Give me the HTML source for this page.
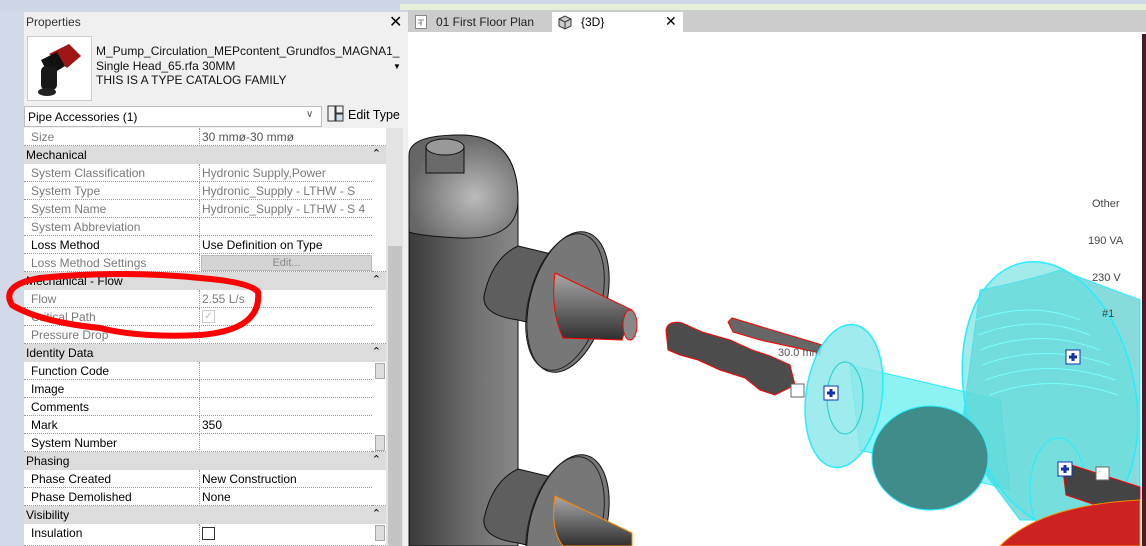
<!DOCTYPE html>
<html><head><meta charset="utf-8"><style>
*{margin:0;padding:0;box-sizing:border-box}
html,body{width:1146px;height:546px;overflow:hidden}
body{background:#fff;font-family:"Liberation Sans",sans-serif;font-size:12px;position:relative}
.a{position:absolute}
.row{position:absolute;left:24px;width:348px;height:18px;border-bottom:1px dotted #999;background:#fff}
.row .l{position:absolute;left:7px;top:2px;color:#000}
.row .v{position:absolute;left:178px;top:2px;color:#000}
.row .s{position:absolute;left:175px;top:0;width:1px;height:18px;border-left:1px dotted #999}
.g .l,.g .v{color:#7a7a7a}
.hd{position:absolute;left:24px;width:362px;height:18px;background:#dcdcdc}
.hd .l{position:absolute;left:2px;top:2px}
.hd .c{position:absolute;right:5px;top:1px;font-size:11px}
.rc{position:absolute;left:372px;width:14px;height:18px;border-bottom:1px dotted #999;background:#fff}
</style></head><body>
<div class="a" style="left:0;top:0;width:1146px;height:12px;background:#cfd7e6"></div>
<div class="a" style="left:400px;top:4px;width:746px;height:6px;background:#e6f0d8"></div>
<div class="a" style="left:0;top:12px;width:24px;height:534px;background:#d2d9e8"></div>
<div class="a" style="left:24px;top:12px;width:380px;height:534px;background:#f0f0f0"></div>
<div class="a" style="left:26px;top:15px;font-size:12px;color:#333">Properties</div>
<div class="a" style="left:389px;top:12px;font-size:16px">✕</div>
<div class="a" style="left:27px;top:36px;width:65px;height:65px;background:#fff;border:1px solid #ccc"></div>
<svg class="a" style="left:27px;top:36px" width="65" height="65"><path d="M22 18 L42 8 L54 20 L40 32 Z" fill="#a01616"/><path d="M14 24 L30 16 L38 30 L22 40 Z" fill="#111"/><rect x="14" y="30" width="16" height="24" rx="5" fill="#181818"/><ellipse cx="20" cy="56" rx="9" ry="4" fill="#222"/></svg>
<div class="a" style="left:96px;top:44px;line-height:14.5px;color:#111">M_Pump_Circulation_MEPcontent_Grundfos_MAGNA1_<br>Single Head_65.rfa 30MM<br>THIS IS A TYPE CATALOG FAMILY</div>
<div class="a" style="left:393px;top:62px;font-size:8px">▼</div>
<div class="a" style="left:24px;top:106px;width:298px;height:21px;background:#fff;border:1px solid #bbb"></div>
<div class="a" style="left:28px;top:110px">Pipe Accessories (1)</div>
<div class="a" style="left:306px;top:109px;font-size:10px;color:#555">∨</div>
<svg class="a" style="left:327px;top:105px" width="18" height="18"><rect x="1" y="1" width="7" height="15" fill="none" stroke="#333"/><rect x="9" y="1" width="7" height="7" fill="none" stroke="#333"/><rect x="9" y="9" width="7" height="7" fill="#cde" stroke="#333"/></svg>
<div class="a" style="left:348px;top:108px;font-size:12.5px">Edit Type</div>
<div class="row g" style="top:128px"><span class="l">Size</span><span class="s"></span><span class="v" style="color:#555">30 mmø-30 mmø</span></div>
<div class="rc" style="top:128px"></div>
<div class="hd" style="top:146px"><span class="l">Mechanical</span><span class="c">⌃</span></div>
<div class="row g" style="top:164px"><span class="l">System Classification</span><span class="s"></span><span class="v">Hydronic Supply,Power</span></div>
<div class="row g" style="top:182px"><span class="l">System Type</span><span class="s"></span><span class="v">Hydronic_Supply - LTHW -  S</span></div>
<div class="row g" style="top:200px"><span class="l">System Name</span><span class="s"></span><span class="v">Hydronic_Supply - LTHW -  S 4</span></div>
<div class="row g" style="top:218px"><span class="l">System Abbreviation</span><span class="s"></span></div>
<div class="row" style="top:236px"><span class="l">Loss Method</span><span class="s"></span><span class="v">Use Definition on Type</span></div>
<div class="row g" style="top:254px"><span class="l">Loss Method Settings</span><span class="s"></span><span class="a" style="left:177px;top:1px;width:171px;height:16px;background:#d4d4d4;border:1px solid #bbb;text-align:center;color:#888;font-size:11px;line-height:14px">Edit...</span></div>
<div class="hd" style="top:272px"><span class="l">Mechanical - Flow</span><span class="c">⌃</span></div>
<div class="row g" style="top:290px"><span class="l">Flow</span><span class="s"></span><span class="v">2.55 L/s</span></div>
<div class="row g" style="top:308px"><span class="l">Critical Path</span><span class="s"></span><span class="a" style="left:178px;top:2px;width:13px;height:13px;border:1px solid #ccc;color:#bbb;font-size:10px;line-height:11px;text-align:center">✓</span></div>
<div class="row g" style="top:326px"><span class="l">Pressure Drop</span><span class="s"></span></div>
<div class="hd" style="top:344px"><span class="l">Identity Data</span><span class="c">⌃</span></div>
<div class="row" style="top:362px"><span class="l">Function Code</span><span class="s"></span></div>
<div class="row" style="top:380px"><span class="l">Image</span><span class="s"></span></div>
<div class="row" style="top:398px"><span class="l">Comments</span><span class="s"></span></div>
<div class="row" style="top:416px"><span class="l">Mark</span><span class="s"></span><span class="v">350</span></div>
<div class="row" style="top:434px"><span class="l">System Number</span><span class="s"></span></div>
<div class="hd" style="top:452px"><span class="l">Phasing</span><span class="c">⌃</span></div>
<div class="row" style="top:470px"><span class="l">Phase Created</span><span class="s"></span><span class="v">New Construction</span></div>
<div class="row" style="top:488px"><span class="l">Phase Demolished</span><span class="s"></span><span class="v">None</span></div>
<div class="hd" style="top:506px"><span class="l">Visibility</span><span class="c">⌃</span></div>
<div class="row" style="top:524px;height:22px"><span class="l">Insulation</span><span class="s"></span><span class="a" style="left:178px;top:3px;width:13px;height:13px;border:1px solid #333;background:#fff"></span></div>
<div class="rc" style="top:164px;height:108px"></div><div class="rc" style="top:290px;height:54px"></div><div class="rc" style="top:362px;height:90px"></div><div class="rc" style="top:470px;height:36px"></div><div class="rc" style="top:524px;height:22px"></div>
<div class="a" style="left:375px;top:363px;width:10px;height:16px;background:#ddd;border:1px solid #aaa"></div>
<div class="a" style="left:375px;top:435px;width:10px;height:16px;background:#ddd;border:1px solid #aaa"></div>
<div class="a" style="left:375px;top:525px;width:10px;height:16px;background:#ddd;border:1px solid #aaa"></div>
<div class="a" style="left:386px;top:128px;width:17px;height:418px;background:#e4e4e4"></div>
<div class="a" style="left:388px;top:246px;width:14px;height:300px;background:#c4c4c4"></div>
<div class="a" style="left:403px;top:12px;width:5px;height:534px;background:#f0f0f0"></div>
<div class="a" style="left:408px;top:10px;width:738px;height:22px;background:#cccccc"></div>
<div class="a" style="left:408px;top:32px;width:738px;height:2px;background:#fff"></div>
<svg class="a" style="left:415px;top:15px" width="12" height="14"><rect x=".5" y=".5" width="11" height="13" fill="#fff" stroke="#888"/><path d="M3 5h6M3 8h4M6 5v6" stroke="#888"/></svg>
<div class="a" style="left:436px;top:15px;color:#222">01 First Floor Plan</div>
<div class="a" style="left:552px;top:12px;width:131px;height:20px;background:#fff"></div>
<svg class="a" style="left:557px;top:14px" width="16" height="16"><path d="M2 5L8 2L14 5V12L8 15L2 12Z" fill="#ccc" stroke="#333"/><path d="M2 5L8 8L14 5M8 8V15" stroke="#333" fill="none"/></svg>
<div class="a" style="left:581px;top:15px">{3D}</div>
<div class="a" style="left:665px;top:13px;font-size:14px">✕</div>
<!-- 3D view in page coords -->
<svg class="a" style="left:0;top:0" width="1146" height="546">
<defs>
<clipPath id="cp"><rect x="408" y="34" width="738" height="512"/></clipPath>
<linearGradient id="gv" x1="0" x2="1"><stop offset="0" stop-color="#3a3a3a"/><stop offset=".6" stop-color="#707070"/><stop offset="1" stop-color="#888"/></linearGradient>
<radialGradient id="gd" cx=".6" cy=".6" r=".6"><stop offset="0" stop-color="#bbb"/><stop offset="1" stop-color="#666"/></radialGradient>
<linearGradient id="gc" x1="0" y1="0" x2="0" y2="1"><stop offset="0" stop-color="#a8a8a8"/><stop offset="1" stop-color="#303030"/></linearGradient>
</defs>
<g clip-path="url(#cp)">
<path d="M409 546V182 Q409 135 460 135 Q518 135 518 200 V546Z" fill="url(#gv)" stroke="#111"/>
<path d="M409 155 Q409 135 460 135 Q518 135 518 200 Q518 240 460 238 Q420 236 409 232Z" fill="url(#gd)" stroke="#111"/>
<rect x="426" y="146" width="38" height="27" fill="#6a6a6a" stroke="#111"/><ellipse cx="445" cy="147" rx="19" ry="8" fill="#999" stroke="#111"/>
<g id="noz">
<path d="M518 246 L560 256 L560 330 L518 320 Q482 315 484 296 Q492 258 518 246Z" fill="#5e5e5e" stroke="#111"/>
<ellipse cx="568" cy="302" rx="38" ry="72" transform="rotate(15 568 302)" fill="#777" stroke="#111"/>
<ellipse cx="565" cy="302" rx="36" ry="70" transform="rotate(15 565 302)" fill="none" stroke="#222"/>
</g>
<path d="M555 273 L632 310 L622 340 L563 338 Q550 310 555 273Z" fill="url(#gc)" stroke="red"/>
<ellipse cx="630" cy="325" rx="7" ry="15" fill="#888" stroke="red"/>
<use href="#noz" transform="translate(0,223)"/>
<path d="M555 496 L632 533 L632 546 L563 546 Q550 530 555 496Z" fill="url(#gc)" stroke="#f80"/>
<!-- valve -->
<path d="M666 330 Q668 320 682 323 L702 332 L730 340 L752 350 L770 356 L790 365 L795 385 L775 395 L760 390 L745 378 L720 370 L698 360 L680 355 L668 350Z" fill="#4c4c4c" stroke="red"/>
<path d="M728 322 L732 318 L822 345 L820 353 L760 340 L733 332Z" fill="#666" stroke="red"/>
<rect x="791" y="384" width="13" height="13" fill="#fff" stroke="#666"/>
<text x="778" y="356" font-size="11" fill="#555" font-family="Liberation Sans">30.0 mm</text>
<!-- cyan pump -->
<path d="M850 365 L1000 400 L1010 490 L860 450Z" fill="#6ee" fill-opacity=".75" stroke="#2ef"/>
<ellipse cx="844" cy="396" rx="38" ry="72" transform="rotate(8 844 396)" fill="#8ee8ea" fill-opacity=".85" stroke="#2ef" stroke-width="1.5"/>
<ellipse cx="845" cy="398" rx="18" ry="36" fill="none" stroke="#2cc"/>
<path d="M980 290 Q1030 280 1060 270 L1140 300 L1140 520 L1020 520 L960 440Z" fill="#5cc" fill-opacity=".7" stroke="#2ef"/>
<ellipse cx="1050" cy="395" rx="85" ry="135" transform="rotate(-12 1050 395)" fill="#6dd" fill-opacity=".6" stroke="#2ef" stroke-width="1.5"/>
<path d="M975 320 Q1030 300 1080 320 M978 335 Q1035 313 1090 335 M980 350 Q1040 327 1100 350 M982 365 Q1045 342 1110 365 M985 380 Q1048 357 1115 380 M990 395 Q1050 372 1118 395" stroke="#7ff" fill="none"/>
<ellipse cx="930" cy="458" rx="58" ry="52" fill="#3f8c8a" stroke="#2ef"/>
<ellipse cx="1058" cy="490" rx="28" ry="52" fill="#7dd" fill-opacity=".8" stroke="#2ef"/>
<path d="M1062 462 L1140 487 L1140 520 L1066 495Z" fill="#444" stroke="red"/>
<path d="M1000 546 Q1040 505 1140 500 V546Z" fill="#c22" stroke="#f80"/>
<rect x="824" y="386" width="14" height="14" fill="#fff" stroke="#13a"/><path d="M831 389v8M827 393h8" stroke="#13a" stroke-width="3"/>
<rect x="1066" y="350" width="14" height="14" fill="#fff" stroke="#13a"/><path d="M1073 353v8M1069 357h8" stroke="#13a" stroke-width="3"/>
<rect x="1058" y="462" width="14" height="14" fill="#fff" stroke="#13a"/><path d="M1065 465v8M1061 469h8" stroke="#13a" stroke-width="3"/>
<rect x="1096" y="467" width="13" height="13" fill="#fff" stroke="#666"/>
<text x="1092" y="207" font-size="11" fill="#444" font-family="Liberation Sans">Other</text>
<text x="1088" y="244" font-size="11" fill="#444" font-family="Liberation Sans">190 VA</text>
<text x="1092" y="281" font-size="11" fill="#444" font-family="Liberation Sans">230 V</text>
<text x="1102" y="317" font-size="11" fill="#444" font-family="Liberation Sans">#1</text>
<rect x="1142" y="34" width="4" height="512" fill="#4a1a2a"/>
</g>
<path d="M40 278 Q120 270 200 278 Q250 282 258 292 Q262 330 200 335 Q140 338 100 328 Q40 322 12 305 Q0 285 40 278Z" fill="none" stroke="#f00" stroke-width="6"/>
</svg>
</body></html>
